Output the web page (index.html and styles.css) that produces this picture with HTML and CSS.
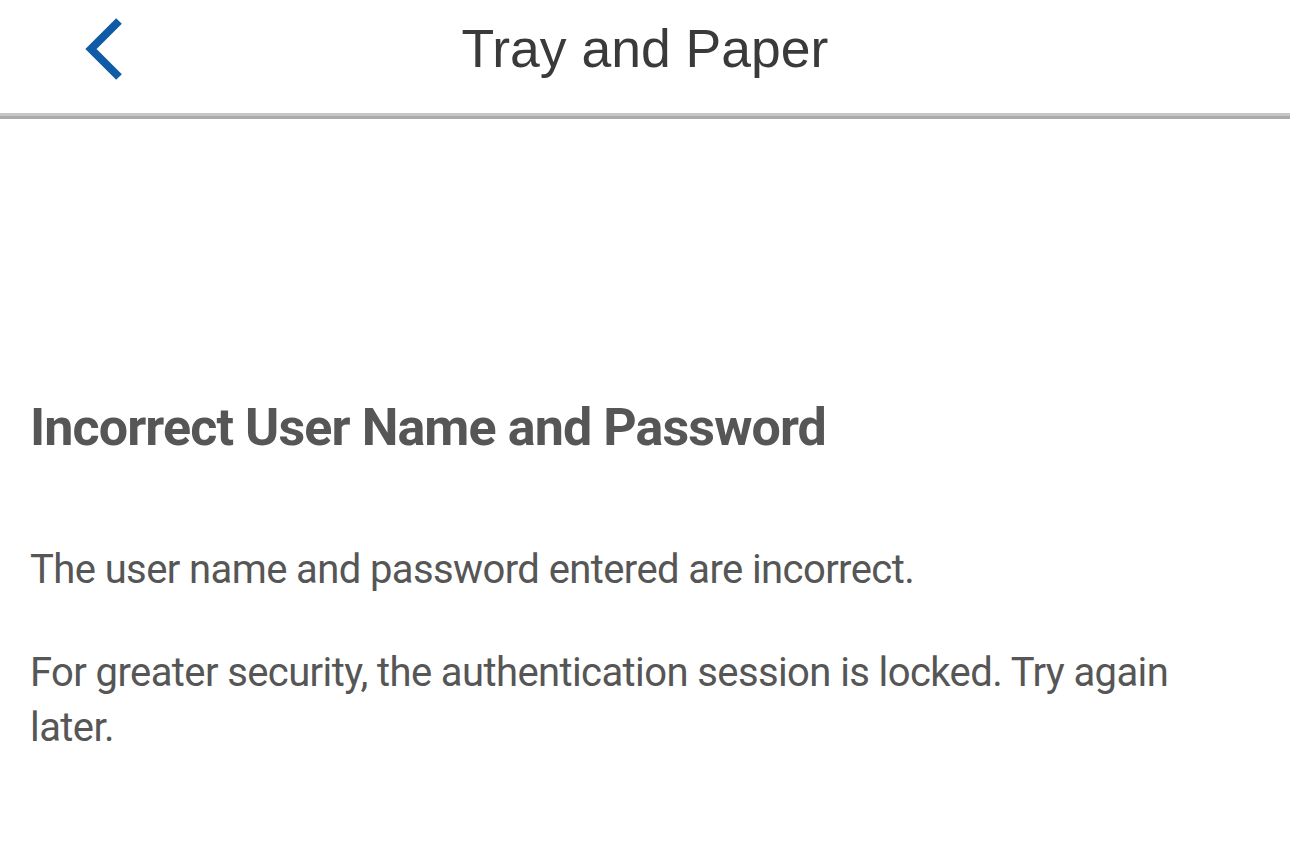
FILE: index.html
```html
<!DOCTYPE html>
<html lang="en">
<head>
<meta charset="utf-8">
<title>Tray and Paper</title>
<link rel="stylesheet" href="styles.css">
</head>
<body>
<header class="topbar">
  <button class="back" aria-label="Back">
    <svg width="48" height="70" viewBox="0 0 48 70">
      <polyline points="34,6 6,34 34,62" fill="none" stroke="#0f5ba6" stroke-width="8" stroke-linejoin="miter" stroke-linecap="butt"/>
    </svg>
  </button>
  <h1 class="title">Tray and Paper</h1>
  <div class="spacer"></div>
</header>
<main class="content">
  <h2 class="heading">Incorrect User Name and Password</h2>
  <p class="msg">The user name and password entered are incorrect.</p>
  <p class="msg">For greater security, the authentication session is locked. Try again later.</p>
</main>
</body>
</html>
```
FILE: styles.css
```css
html, body {
  margin: 0;
  padding: 0;
  background: #ffffff;
}
body {
  width: 1290px;
  height: 844px;
  overflow: hidden;
}
.topbar {
  display: grid;
  grid-template-columns: 200px 1fr 200px;
  align-items: center;
  height: 113px;
  border-bottom: 3px solid #c6c6c6;
  box-shadow: 0 3px 0 #ababab;
}
.back {
  justify-self: start;
  margin-left: 85px;
  margin-top: -14px;
  padding: 0;
  border: 0;
  background: none;
  display: flex;
}
.title {
  margin: 0;
  text-align: center;
  font-family: "Liberation Sans", Arial, sans-serif;
  font-weight: 400;
  font-size: 53.5px;
  color: #3a3a3a;
  margin-top: -16px;
}
.content {
  padding: 0 30px;
  margin-top: 282px;
  color: #565656;
  font-family: Roboto, "Liberation Sans", sans-serif;
}
.heading {
  margin: 0 0 84px;
  font-size: 52px;
  font-weight: 700;
  line-height: 60px;
  letter-spacing: -0.9px;
}
.msg {
  margin: 0 0 48px;
  font-size: 40px;
  line-height: 55px;
  letter-spacing: -0.6px;
}
```
